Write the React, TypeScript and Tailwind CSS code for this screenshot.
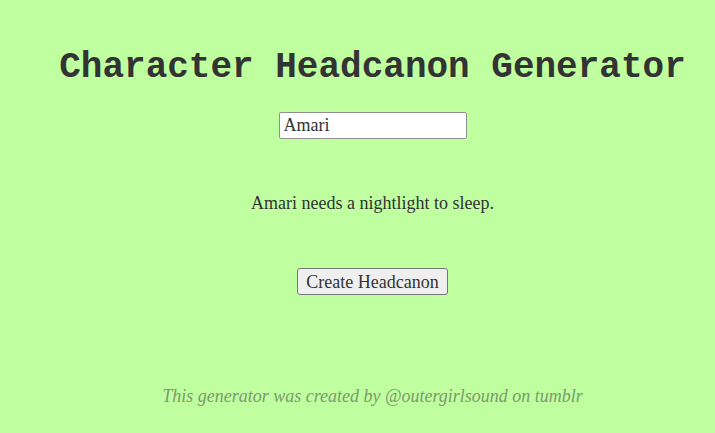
import React, { useState } from "react";

const headcanons = [
  "needs a nightlight to sleep.",
  "hums when they're nervous.",
  "keeps every letter they've ever received.",
];

const App = () => {
  const [name, setName] = useState<string>("Amari");
  const [idx, setIdx] = useState<number>(0);

  return (
    <div className="min-h-[433px] bg-[#bfffa0] pl-[30px] text-[#333]">
      <div className="flex flex-col items-center">
        <h1 className="mt-[44px] whitespace-nowrap font-['Liberation_Mono',monospace] text-[36px] font-bold leading-[48px]">
          Character Headcanon Generator
        </h1>
        <input
          type="text"
          value={name}
          onChange={(e) => setName(e.target.value)}
          className="mt-[20px] h-[27px] w-[188px] rounded-[2px] border border-[#8f8f8f] bg-white px-[4px] font-['Liberation_Serif',serif] text-[18px] text-[#333] outline-none"
        />
        <p className="mt-[52px] font-['Liberation_Serif',serif] text-[18px] leading-[24px]">
          {name} {headcanons[idx]}
        </p>
        <button
          onClick={() => setIdx((idx + 1) % headcanons.length)}
          className="mt-[53px] h-[27px] rounded-[3px] border border-[#767676] bg-[#efefef] px-[8px] font-['Liberation_Serif',serif] text-[18px] leading-none text-[#333]"
        >
          Create Headcanon
        </button>
        <p className="mt-[88px] font-['Liberation_Serif',serif] text-[18px] italic text-[#7c9a6c]">
          This generator was created by @outergirlsound on tumblr
        </p>
      </div>
    </div>
  );
};

export default App;
